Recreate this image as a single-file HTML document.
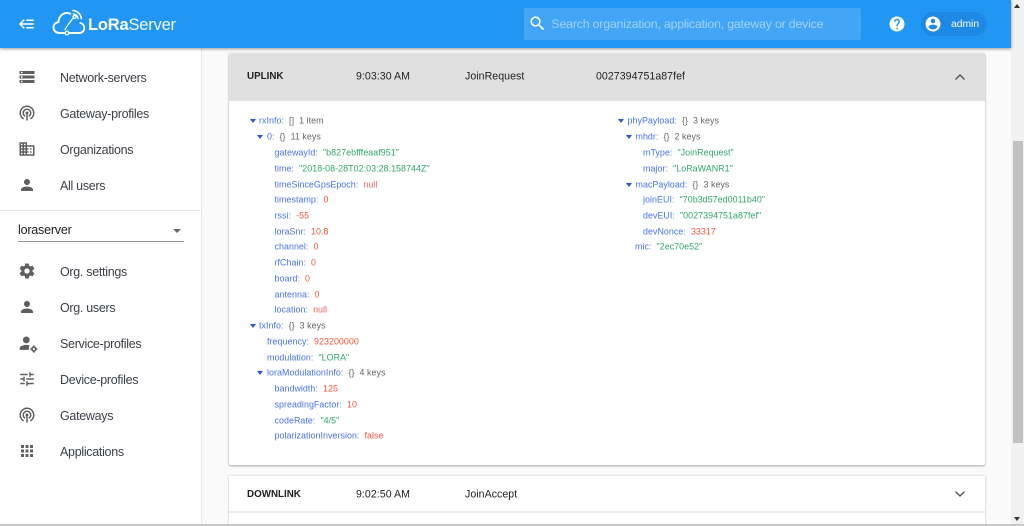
<!DOCTYPE html>
<html><head><meta charset="utf-8"><style>
html,body{margin:0;padding:0;width:1024px;height:526px;overflow:hidden;background:#fafafa;font-family:"Liberation Sans",sans-serif}
div,span,svg{box-sizing:border-box}
.a{position:absolute}
.t{position:absolute;white-space:nowrap;transform:translateY(-50%);line-height:1}
.n{font-size:12.5px;color:#3c4048;left:60px;letter-spacing:-.3px;margin-top:1px}
.i{position:absolute;left:18px;width:18px;height:18px;fill:#5f5f5f}
.h{font-size:10.6px;color:#222;letter-spacing:.04px;margin-top:1px}
.j{font-size:8.9px;color:#666;letter-spacing:.05px;margin-top:1px}
.k{color:#4a72e8}.s{color:#2fa56e}.v{color:#f0573a}.u{color:#f0606a}
.ar{position:absolute;width:0;height:0;border-left:3px solid transparent;border-right:3px solid transparent;border-top:4.5px solid #2b55e8;transform:translateY(-25%)}
</style></head><body>
<!-- sidebar -->
<div class="a" style="left:0;top:48px;width:202px;height:476px;background:#fff;border-right:1px solid #e8e8e8"></div>
<div class="a" style="left:0;top:210px;width:201px;height:1px;background:#e6e6e6"></div>

<svg class="i" style="top:68px" viewBox="0 0 24 24"><path d="M2 20h20v-4H2v4zm2-3h2v2H4v-2zM2 4v4h20V4H2zm4 3H4V5h2v2zm-4 7h20v-4H2v4zm2-3h2v2H4v-2z"/></svg>
<div class="t n" style="top:77px">Network-servers</div>
<svg class="i" style="top:104px" viewBox="0 0 24 24"><path d="M12 10c-1.100 0-2 .9-2 2 0 .7.4 1.300 1 1.700V22h2v-8.300c.6-.4 1-1 1-1.700 0-1.100-.9-2-2-2zM18 12c0-3.300-2.700-6-6-6s-6 2.700-6 6c0 2.200 1.200 4.200 3 5.200l1-1.700c-1.200-.7-2-2-2-3.500 0-2.200 1.800-4 4-4s4 1.800 4 4c0 1.500-.8 2.800-2 3.500l1 1.700c1.800-1 3-3 3-5.200zM12 2C6.500 2 2 6.500 2 12c0 3.700 2 6.900 5 8.700l1-1.700c-2.400-1.400-4-4-4-7 0-4.400 3.600-8 8-8s8 3.600 8 8c0 3-1.600 5.600-4 7l1 1.700c3-1.800 5-5 5-8.700 0-5.500-4.500-10-10-10z"/></svg>
<div class="t n" style="top:113px">Gateway-profiles</div>
<svg class="i" style="top:140px" viewBox="0 0 24 24"><path d="M12 7V3H2v18h20V7H12zM6 19H4v-2h2v2zm0-4H4v-2h2v2zm0-4H4V9h2v2zm0-4H4V5h2v2zm4 12H8v-2h2v2zm0-4H8v-2h2v2zm0-4H8V9h2v2zm0-4H8V5h2v2zm10 12h-8v-2h2v-2h-2v-2h2v-2h-2V9h8v10zm-2-8h-2v2h2v-2zm0 4h-2v2h2v-2z"/></svg>
<div class="t n" style="top:149px">Organizations</div>
<svg class="i" style="top:176px" viewBox="0 0 24 24"><path d="M12 12c2.210 0 4-1.790 4-4s-1.790-4-4-4-4 1.790-4 4 1.790 4 4 4zm0 2c-2.670 0-8 1.340-8 4v2h16v-2c0-2.660-5.330-4-8-4z"/></svg>
<div class="t n" style="top:185px">All users</div>

<div class="t" style="left:18px;top:229.500px;font-size:12.5px;color:#222;letter-spacing:-.2px">loraserver</div>
<div class="a" style="left:173px;top:229px;width:0;height:0;border-left:4px solid transparent;border-right:4px solid transparent;border-top:4px solid #6b6b6b"></div>
<div class="a" style="left:18px;top:241px;width:166px;height:1px;background:#999"></div>

<svg class="i" style="top:262px" viewBox="0 0 24 24"><path d="M19.430 12.980c.04-.32.07-.64.07-.98s-.03-.66-.07-.98l2.110-1.650c.19-.15.24-.42.12-.64l-2-3.460c-.12-.22-.39-.3-.61-.22l-2.490 1c-.52-.4-1.080-.73-1.690-.98l-.38-2.650C14.460 2.180 14.250 2 14 2h-4c-.25 0-.46.18-.49.42l-.38 2.650c-.61.25-1.170.59-1.690.98l-2.490-1c-.23-.09-.49 0-.61.22l-2 3.460c-.13.22-.07.49.12.64l2.110 1.650c-.04.32-.07.65-.07.98s.03.66.07.98l-2.110 1.650c-.19.15-.24.42-.12.64l2 3.460c.12.22.39.3.61.22l2.490-1c.52.4 1.080.73 1.690.98l.38 2.650c.03.24.24.42.49.42h4c.25 0 .46-.18.49-.42l.38-2.650c.61-.25 1.170-.59 1.690-.98l2.490 1c.23.09.49 0 .61-.22l2-3.460c.12-.22.07-.49-.12-.64l-2.110-1.650zM12 15.500c-1.930 0-3.500-1.570-3.500-3.500s1.570-3.500 3.500-3.500 3.500 1.570 3.500 3.500-1.570 3.500-3.500 3.500z"/></svg>
<div class="t n" style="top:271px">Org. settings</div>
<svg class="i" style="top:298px" viewBox="0 0 24 24"><path d="M12 12c2.210 0 4-1.790 4-4s-1.790-4-4-4-4 1.790-4 4 1.790 4 4 4zm0 2c-2.670 0-8 1.340-8 4v2h16v-2c0-2.660-5.330-4-8-4z"/></svg>
<div class="t n" style="top:307px">Org. users</div>
<svg class="i" style="top:334px;width:20px;height:20px" viewBox="0 0 24 24"><path d="M10 11c2.200 0 4-1.800 4-4s-1.800-4-4-4-4 1.800-4 4 1.800 4 4 4zm0 2c-2.700 0-8 1.300-8 4v2h11v-2.500c0-1.200.6-2.300 1.300-2.800-1.800-.5-3.300-.7-4.300-.7z"/><circle cx="19" cy="18" r="2.300" fill="none" stroke="#5f5f5f" stroke-width="2"/><path d="M18.200 13.500h1.600v1.500h-1.600zM18.200 21h1.600v1.500h-1.600zM14.500 17.200h1.500v1.600h-1.500zM22 17.200h1.500v1.600H22z"/></svg>
<div class="t n" style="top:343px">Service-profiles</div>
<svg class="i" style="top:370px" viewBox="0 0 24 24"><path d="M3 17v2h6v-2H3zM3 5v2h10V5H3zm10 16v-2h8v-2h-8v-2h-2v6h2zM7 9v2H3v2h4v2h2V9H7zm14 4v-2H11v2h10zm-6-4h2V7h4V5h-4V3h-2v6z"/></svg>
<div class="t n" style="top:379px">Device-profiles</div>
<svg class="i" style="top:406px" viewBox="0 0 24 24"><path d="M12 10c-1.100 0-2 .9-2 2 0 .7.4 1.300 1 1.700V22h2v-8.300c.6-.4 1-1 1-1.700 0-1.100-.9-2-2-2zM18 12c0-3.300-2.700-6-6-6s-6 2.700-6 6c0 2.200 1.200 4.200 3 5.200l1-1.700c-1.200-.7-2-2-2-3.500 0-2.200 1.800-4 4-4s4 1.800 4 4c0 1.500-.8 2.800-2 3.500l1 1.700c1.800-1 3-3 3-5.200zM12 2C6.500 2 2 6.500 2 12c0 3.700 2 6.900 5 8.700l1-1.700c-2.400-1.400-4-4-4-7 0-4.400 3.600-8 8-8s8 3.600 8 8c0 3-1.600 5.600-4 7l1 1.700c3-1.800 5-5 5-8.700 0-5.500-4.500-10-10-10z"/></svg>
<div class="t n" style="top:415px">Gateways</div>
<svg class="i" style="top:442px" viewBox="0 0 24 24"><path d="M4 8h4V4H4v4zm6 12h4v-4h-4v4zm-6 0h4v-4H4v4zm0-6h4v-4H4v4zm6 0h4v-4h-4v4zm6-10v4h4V4h-4zm-6 4h4V4h-4v4zm6 6h4v-4h-4v4zm0 6h4v-4h-4v4z"/></svg>
<div class="t n" style="top:451px">Applications</div>

<!-- card 1 -->
<div class="a" style="left:229px;top:53px;width:756px;height:412px;background:#fff;border-radius:2px;box-shadow:0 1px 2px rgba(0,0,0,.35)"></div>
<div class="a" style="left:229px;top:53px;width:756px;height:48px;background:#e0e0e0;border-radius:2px 2px 0 0"></div>
<div class="t h" style="left:247px;top:76px;font-weight:700;font-size:9.8px;letter-spacing:0">UPLINK</div>
<div class="t h" style="left:356px;top:76px">9:03:30 AM</div>
<div class="t h" style="left:465px;top:76px">JoinRequest</div>
<div class="t h" style="left:596px;top:76px">0027394751a87fef</div>
<svg class="a" style="left:953px;top:70px;width:14px;height:14px" viewBox="0 0 14 14"><path d="M2.500 9.500 7 5l4.500 4.500" fill="none" stroke="#555" stroke-width="1.400"/></svg>

<!-- json left -->
<div class="ar" style="left:249.500px;top:120px"></div><div class="t j" style="left:259px;top:120px"><span class="k">rxInfo:</span>&nbsp; [] &nbsp;1 item</div>
<div class="ar" style="left:256.500px;top:136px"></div><div class="t j" style="left:267px;top:136px"><span class="k">0:</span>&nbsp; {} &nbsp;11 keys</div>
<div class="t j" style="left:274.500px;top:152px"><span class="k">gatewayId:</span>&nbsp; <span class="s">"b827ebfffeaaf951"</span></div>
<div class="t j" style="left:274.500px;top:167.500px"><span class="k">time:</span>&nbsp; <span class="s">"2018-08-28T02:03:28.158744Z"</span></div>
<div class="t j" style="left:274.500px;top:183.500px"><span class="k">timeSinceGpsEpoch:</span>&nbsp; <span class="u">null</span></div>
<div class="t j" style="left:274.500px;top:199px"><span class="k">timestamp:</span>&nbsp; <span class="v">0</span></div>
<div class="t j" style="left:274.500px;top:214.500px"><span class="k">rssi:</span>&nbsp; <span class="v">-55</span></div>
<div class="t j" style="left:274.500px;top:230.500px"><span class="k">loraSnr:</span>&nbsp; <span class="v">10.8</span></div>
<div class="t j" style="left:274.500px;top:246px"><span class="k">channel:</span>&nbsp; <span class="v">0</span></div>
<div class="t j" style="left:274.500px;top:262px"><span class="k">rfChain:</span>&nbsp; <span class="v">0</span></div>
<div class="t j" style="left:274.500px;top:278px"><span class="k">board:</span>&nbsp; <span class="v">0</span></div>
<div class="t j" style="left:274.500px;top:293.500px"><span class="k">antenna:</span>&nbsp; <span class="v">0</span></div>
<div class="t j" style="left:274.500px;top:309px"><span class="k">location:</span>&nbsp; <span class="u">null</span></div>
<div class="ar" style="left:249.500px;top:325px"></div><div class="t j" style="left:259px;top:325px"><span class="k">txInfo:</span>&nbsp; {} &nbsp;3 keys</div>
<div class="t j" style="left:267px;top:341px"><span class="k">frequency:</span>&nbsp; <span class="v">923200000</span></div>
<div class="t j" style="left:267px;top:356.500px"><span class="k">modulation:</span>&nbsp; <span class="s">"LORA"</span></div>
<div class="ar" style="left:256.500px;top:372px"></div><div class="t j" style="left:267px;top:372px"><span class="k">loraModulationInfo:</span>&nbsp; {} &nbsp;4 keys</div>
<div class="t j" style="left:274.500px;top:388px"><span class="k">bandwidth:</span>&nbsp; <span class="v">125</span></div>
<div class="t j" style="left:274.500px;top:404px"><span class="k">spreadingFactor:</span>&nbsp; <span class="v">10</span></div>
<div class="t j" style="left:274.500px;top:419.500px"><span class="k">codeRate:</span>&nbsp; <span class="s">"4/5"</span></div>
<div class="t j" style="left:274.500px;top:435px"><span class="k">polarizationInversion:</span>&nbsp; <span class="v">false</span></div>

<!-- json right -->
<div class="ar" style="left:617.500px;top:120px"></div><div class="t j" style="left:627.500px;top:120px"><span class="k">phyPayload:</span>&nbsp; {} &nbsp;3 keys</div>
<div class="ar" style="left:625.500px;top:136px"></div><div class="t j" style="left:635.500px;top:136px"><span class="k">mhdr:</span>&nbsp; {} &nbsp;2 keys</div>
<div class="t j" style="left:643px;top:152px"><span class="k">mType:</span>&nbsp; <span class="s">"JoinRequest"</span></div>
<div class="t j" style="left:643px;top:167.500px"><span class="k">major:</span>&nbsp; <span class="s">"LoRaWANR1"</span></div>
<div class="ar" style="left:625.500px;top:183.500px"></div><div class="t j" style="left:635.500px;top:183.500px"><span class="k">macPayload:</span>&nbsp; {} &nbsp;3 keys</div>
<div class="t j" style="left:643px;top:199px"><span class="k">joinEUI:</span>&nbsp; <span class="s">"70b3d57ed0011b40"</span></div>
<div class="t j" style="left:643px;top:214.500px"><span class="k">devEUI:</span>&nbsp; <span class="s">"0027394751a87fef"</span></div>
<div class="t j" style="left:643px;top:230.500px"><span class="k">devNonce:</span>&nbsp; <span class="v">33317</span></div>
<div class="t j" style="left:635px;top:246px"><span class="k">mic:</span>&nbsp; <span class="s">"2ec70e52"</span></div>

<!-- card 2 -->
<div class="a" style="left:229px;top:476px;width:756px;height:50px;background:#fff;box-shadow:0 0 2px rgba(0,0,0,.25)"></div>
<div class="a" style="left:229px;top:511px;width:756px;height:2px;background:#eaeaea"></div>
<div class="t h" style="left:247px;top:494px;font-weight:700;font-size:9.8px;letter-spacing:0">DOWNLINK</div>
<div class="t h" style="left:356px;top:494px">9:02:50 AM</div>
<div class="t h" style="left:465px;top:494px">JoinAccept</div>
<svg class="a" style="left:953px;top:487px;width:14px;height:14px" viewBox="0 0 14 14"><path d="M2.500 4.500 7 9l4.500-4.500" fill="none" stroke="#555" stroke-width="1.400"/></svg>

<!-- scrollbar -->
<div class="a" style="left:1011px;top:0;width:13px;height:526px;background:#f1f1f1"></div>
<div class="a" style="left:1013px;top:141px;width:10px;height:302px;background:#c1c1c1"></div>
<div class="a" style="left:1014px;top:4px;width:0;height:0;border-left:3px solid transparent;border-right:3px solid transparent;border-bottom:4px solid #333"></div>
<div class="a" style="left:1014px;top:517px;width:0;height:0;border-left:3px solid transparent;border-right:3px solid transparent;border-top:4px solid #333"></div>

<!-- header -->
<div class="a" style="left:0;top:0;width:1011px;height:48px;background:#2196f3;box-shadow:0 1px 3px rgba(0,0,0,.4)"></div>
<svg class="a" style="left:18px;top:15px;width:18px;height:18px" viewBox="0 0 24 24" fill="#fff"><path d="M5 13l4 4-1.400 1.420L1.180 12 7.600 5.580 9 7l-4 4h16v2H5M21 6v2H11V6h10M21 16v2H11v-2h10z"/></svg>
<svg class="a" style="left:52px;top:9px;width:34px;height:28px" viewBox="0 0 34 28" fill="none" stroke="#fff" stroke-width="1.900" stroke-linecap="round"><path d="M12 24H7.500C4 24 1.500 21.500 1.500 18.500S3.800 13.400 6.500 13C6.500 8 10.300 4 15 4c1.300 0 2.400.3 3.400.7"/><path d="M18 24h9.500c2.500 0 4.800-2.200 4.800-5 0-2.500-1.700-4.500-4-5"/><path d="M21.500 8.500l-6 8M13 20.500l1.800-3" stroke-width="1.300"/><circle cx="15" cy="24" r="1.800" stroke-width="1.300"/><circle cx="22.500" cy="8" r="1.500" stroke-width="1.200"/><path d="M21 1.500c4.500.3 8 3.800 8.300 8.300M21.500 5c2.500.2 4.300 2 4.500 4.500" stroke-width="1.500"/></svg>
<div class="t" style="left:88px;top:24.500px;font-size:16.5px;color:#fff;letter-spacing:-.2px"><b>LoRa</b><span style="opacity:.92">Server</span></div>

<div class="a" style="left:524px;top:8px;width:337px;height:32px;background:#42a5f5;border-radius:2px"></div>
<svg class="a" style="left:528px;top:14px;width:19px;height:19px" viewBox="0 0 24 24" fill="#fff"><path d="M15.500 14h-.79l-.28-.27A6.470 6.470 0 0 0 16 9.500 6.500 6.500 0 1 0 9.500 16c1.610 0 3.090-.59 4.230-1.570l.27.28v.79l5 4.990L20.490 19l-4.990-5zm-6 0C7.010 14 5 11.990 5 9.500S7.010 5 9.500 5 14 7.010 14 9.500 11.990 14 9.500 14z"/></svg>
<div class="t" style="left:551.500px;top:23.500px;font-size:12.3px;letter-spacing:-.18px;color:#a3d3fa">Search organization, application, gateway or device</div>

<svg class="a" style="left:888px;top:15px;width:18px;height:18px" viewBox="0 0 24 24" fill="#fff"><path d="M12 2C6.480 2 2 6.480 2 12s4.480 10 10 10 10-4.480 10-10S17.520 2 12 2zm1 17h-2v-2h2v2zm2.070-7.750l-.9.920C13.450 12.900 13 13.500 13 15h-2v-.5c0-1.100.45-2.100 1.170-2.830l1.240-1.260c.37-.36.59-.86.59-1.410 0-1.100-.9-2-2-2s-2 .9-2 2H8c0-2.210 1.790-4 4-4s4 1.790 4 4c0 .88-.36 1.680-.93 2.250z"/></svg>
<div class="a" style="left:921px;top:12px;width:66px;height:24px;border-radius:12px;background:#1e88e5"></div>
<svg class="a" style="left:924px;top:15px;width:18px;height:18px" viewBox="0 0 24 24" fill="#fff"><path d="M12 2C6.480 2 2 6.480 2 12s4.480 10 10 10 10-4.480 10-10S17.520 2 12 2zm0 3c1.660 0 3 1.340 3 3s-1.340 3-3 3-3-1.340-3-3 1.340-3 3-3zm0 14.200c-2.500 0-4.710-1.280-6-3.220.03-1.990 4-3.080 6-3.080 1.990 0 5.970 1.090 6 3.080-1.290 1.940-3.500 3.220-6 3.220z"/></svg>
<div class="t" style="left:951px;top:24.500px;font-size:10.3px;color:#fff">admin</div>

<!-- bottom strip -->
<div class="a" style="left:0;top:524px;width:1024px;height:2px;background:#c8c8c8"></div>
</body></html>
